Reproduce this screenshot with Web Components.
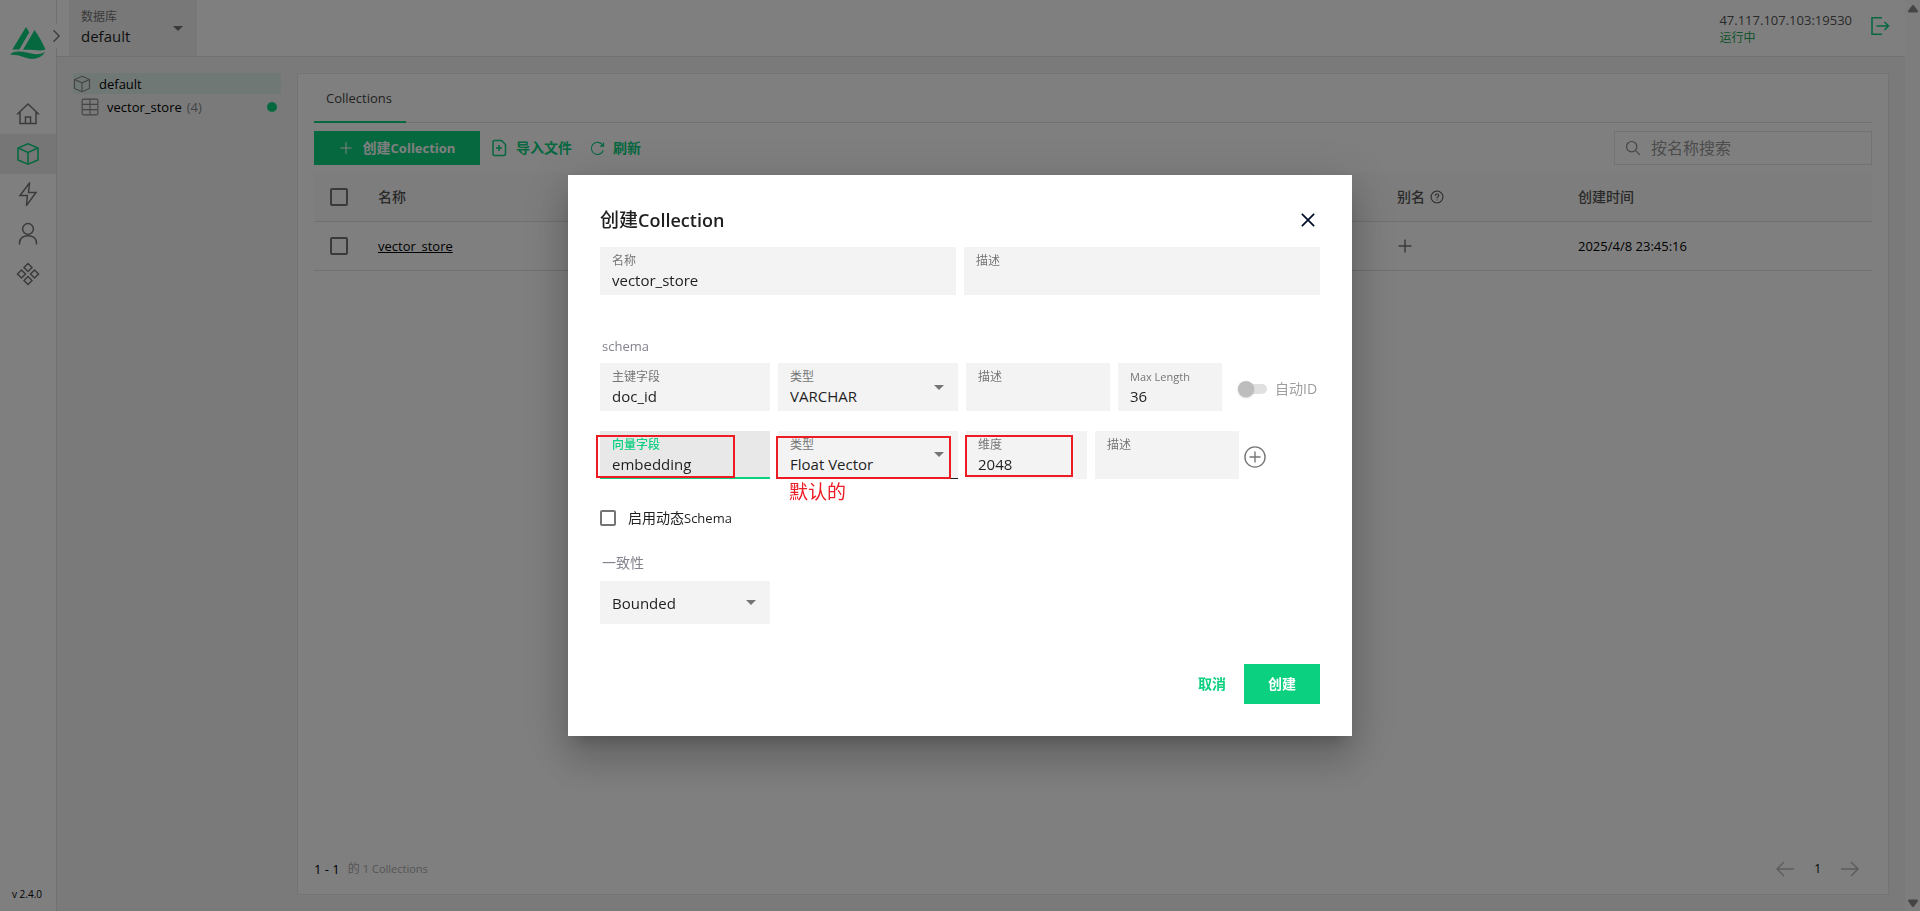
<!DOCTYPE html>
<html lang="zh-CN">
<head>
<meta charset="utf-8">
<title>Collections</title>
<style>
  html, body { height: 100%; margin: 0; }
  body {
    font-family: "Open Sans", "Noto Sans CJK SC", sans-serif;
    font-size: 14px; line-height: 20px; color: #010e29; background: #f5f5f5;
    overflow: hidden;
  }
</style>
</head>
<body>
<app-shell>
  <nav-rail slot="nav"></nav-rail>
  <top-bar slot="top"></top-bar>
  <database-tree slot="tree"></database-tree>
  <collections-panel></collections-panel>
  <scroll-track slot="scroll"></scroll-track>
</app-shell>
<create-dialog></create-dialog>

<script>
const ICONS = {
  logo: ['0 0 36 32', '<g fill="currentColor"><path d="M16 0 19.300 5.300 9.300 22.600H2.300Z"/><path d="M24.500 3C29 9 32.500 16 35.500 22.500 30 24.500 24 22.500 13 22.800Z"/><path d="M3 25.200C11 23.300 18 26 24 27 29 27.700 32.500 26.600 35.300 24.800 32.500 29.200 28 31.800 22.500 31.800 15 31.500 9.500 27 0 27.700Z"/></g>'],
  home: ['0 0 24 24', '<path d="M1 12.500 12 2l11 10.500M4 10v11.500h16V10M9.500 21.500V15h5v6.500"/>'],
  cube: ['0 0 24 24', '<path d="M12 1.700 22 6v12l-10 4.300L2 18V6ZM2 6l10 4.500L22 6M12 10.500v11.800"/>'],
  bolt: ['0 0 24 24', '<path d="M13.500 1 4 13.500h7.300L10.500 23.500 20 10.500h-7.500Z"/>'],
  user: ['0 0 24 24', '<circle cx="12" cy="7" r="5.400"/><path d="M3.500 22.500v-1.500c0-4.500 3.500-7.300 8.500-7.300s8.500 2.800 8.500 7.300v1.500"/>'],
  parts: ['0 0 24 24', '<path d="m12 1.500 4 4-4 4-4-4ZM12 14.500l4 4-4 4-4-4ZM5.500 8l4 4-4 4-4-4ZM18.500 8l4 4-4 4-4-4Z"/>'],
  grid: ['0 0 24 24', '<rect x="1.500" y="1.500" width="21" height="21" rx="2"/><path d="M2 8.500h20M2 15.500h20M12 2v20"/>'],
  chevron: ['0 0 10 16', '<path d="m1.500 1.500 6.500 6.500-6.500 6.500"/>'],
  logout: ['0 0 20 20', '<path d="M12 1.800H2v16.400h10M6.500 10h12M14.500 6l4 4-4 4"/>'],
  plus: ['0 0 16 16', '<path d="M8 1.500v13M1.500 8h13"/>'],
  file: ['0 0 16 18', '<path d="M3.500 1.500h7L14.500 5.500v9.500q0 1.500-1.500 1.500H3.500Q2 16.500 2 15V3q0-1.500 1.500-1.500ZM8 6v6M5 9h6"/>'],
  refresh: ['0 0 16 16', '<path d="M14.200 10A6.500 6.500 0 1 1 13.400 4.200L14.500 5.500M14.500 1.500v4h-4"/>'],
  search: ['0 0 18 18', '<circle cx="7.500" cy="7.500" r="5.800"/><path d="m11.700 11.700 5 5"/>'],
  help: ['0 0 16 16', '<circle cx="8" cy="8" r="6.800"/><path d="M6 6.500q0-2 2-2t2 1.800q0 1-1.200 1.600-.8.500-.8 1.500M8 10.800v1.200"/>'],
  prev: ['0 0 20 16', '<path d="M19 8H2M9 1 2 8l7 7"/>'],
  next: ['0 0 20 16', '<path d="M1 8h17M11 1l7 7-7 7"/>'],
  close: ['0 0 16 16', '<path d="m1 1 14 14M15 1 1 15"/>'],
  add: ['0 0 24 24', '<circle cx="12" cy="12" r="11"/><path d="M12 6v12M6 12h12"/>'],
  down: ['0 0 10 5', '<path fill="currentColor" stroke="none" d="M0 0h10L5 5Z"/>'],
  thumb: ['0 0 10 8', '<path fill="currentColor" stroke="none" d="M4 .5q1-1 2 0l4 5.500q0 1.500-1 1.500H1Q0 7.500 0 6Z"/>']
};

const BASE = `<style>
  :host, *, *::before, *::after { box-sizing: border-box; }
  button, input, select { font: inherit; color: inherit; border: 0; margin: 0; padding: 0; background: none; border-radius: 0; outline: 0; appearance: none; }
  a { color: inherit; }
  .en { font-size: 13px; }
</style>`;

class Base extends HTMLElement {
  constructor() {
    super();
    this.attachShadow({ mode: 'open' });
  }
  connectedCallback() { this.shadowRoot.innerHTML = BASE + this.view(); }
}

customElements.define('ui-icon', class extends Base {
  view() {
    const [box, body] = ICONS[this.getAttribute('name')];
    const [, , w, h] = box.split(' ').map(Number);
    const width = Number(this.getAttribute('size') || w);
    return `<style>:host { display: inline-flex; flex: none; } svg { display: block; }</style>
      <svg width="${width}" height="${Math.round(width * h / w)}" viewBox="${box}" fill="none"
        stroke="${this.getAttribute('name') === 'logo' ? 'none' : 'currentColor'}" stroke-width="${this.getAttribute('weight') || 1.5}" aria-hidden="true">${body}</svg>`;
  }
});

customElements.define('app-shell', class extends Base {
  view() {
    return `<style>
      :host { display: grid; grid-template-columns: auto 1fr auto; height: 100vh; }
      .main { display: grid; grid-template-rows: auto 1fr; min-width: 0; }
      .work { display: grid; grid-template-columns: 208px 1fr; gap: 16px; padding: 16px; min-height: 0; }
    </style>
    <slot name="nav"></slot>
    <div class="main">
      <slot name="top"></slot>
      <main class="work"><slot name="tree"></slot><slot></slot></main>
    </div>
    <slot name="scroll"></slot>`;
  }
});

customElements.define('nav-rail', class extends Base {
  view() {
    const items = ['home', 'cube', 'bolt', 'user', 'parts'];
    const names = ['主页', '数据库', '搜索', '用户', '系统'];
    return `<style>
      :host { position: relative; display: flex; flex-direction: column; width: 57px; background: #fff; border-right: 1px solid #e0e0e0; }
      .logo { display: flex; padding: 27px 0 35px 10px; color: #0ad07f; }
      .toggle { position: absolute; top: 24px; right: -7px; width: 13px; height: 24px; display: flex; align-items: center; justify-content: center; background: #fff; color: #777; }
      nav { display: flex; flex-direction: column; }
      a { display: flex; align-items: center; justify-content: center; height: 40px; color: #777; }
      a.on { background: #ededed; color: #0ad07f; }
      .ver { margin-top: auto; padding: 0 0 8px 12px; font-size: 10px; line-height: 18px; color: #000; }
    </style>
    <div class="logo"><ui-icon name="logo" size="36"></ui-icon></div>
    <button class="toggle" aria-label="展开"><ui-icon name="chevron" size="9" weight="1.600"></ui-icon></button>
    <nav>${items.map((n, i) => `<a href="#${n}" aria-label="${names[i]}" class="${i === 1 ? 'on' : ''}"><ui-icon name="${n}" size="24"></ui-icon></a>`).join('')}</nav>
    <div class="ver">v 2.4.0</div>`;
  }
});

customElements.define('top-bar', class extends Base {
  view() {
    return `<style>
      :host { display: flex; justify-content: space-between; height: 57px; padding: 0 15px 0 12px; background: #fff; border-bottom: 1px solid #e0e0e0; }
      .host { display: flex; gap: 18px; padding-top: 11px; color: #555; }
      .addr { font-size: 13px; line-height: 18px; }
      .run { font-size: 12px; line-height: 18px; color: #1ba954; }
      button { align-self: flex-start; margin-top: 5px; color: #0ad07f; }
      select-field { width: 128px; --box: 56px; --top: 9px; --fill: #f0f0f0; }
    </style>
    <select-field label="数据库" value="default"></select-field>
    <div class="host"><div><div class="addr">47.117.107.103:19530</div><div class="run">运行中</div></div>
    <button aria-label="断开连接"><ui-icon name="logout" size="20"></ui-icon></button></div>`;
  }
});

customElements.define('database-tree', class extends Base {
  view() {
    return `<style>
      :host { display: flex; flex-direction: column; gap: 2px; color: #000; font-size: 13px; }
      a { display: flex; align-items: center; gap: 8px; height: 21px; text-decoration: none; color: #000; }
      ui-icon { color: #888; }
      .db { background: #e0f0ea; }
      .col { padding: 0 4px 0 8px; }
      .count { margin-left: -3px; color: #888; }
      i { margin-left: auto; width: 10px; height: 10px; border-radius: 50%; background: #0ad07f; }
    </style>
    <a class="db" href="#default"><ui-icon name="cube" size="18"></ui-icon>default</a>
    <a class="col" href="#vector_store"><ui-icon name="grid" size="18"></ui-icon><span class="name">vector_store</span><span class="count">(4)</span><i></i></a>`;
  }
});

customElements.define('collections-panel', class extends Base {
  view() {
    return `<style>
      :host { display: flex; flex-direction: column; min-width: 0; padding: 0 16px; background: #fff; border: 1px solid #e9e9e9; }
      .tabs { display: flex; border-bottom: 1px solid #e0e0e0; }
      .tab { height: 49px; margin-bottom: -1px; padding: 0 12px; border-bottom: 2px solid #0ad07f; color: #444; min-width: 92px; text-align: left; font-size: 13px; }
      .bar { display: flex; align-items: center; height: 34px; margin: 8px 0; font-weight: 700; color: #0ad07f; }
      .bar button { display: flex; align-items: center; height: 34px; }
      .bar .new { width: 166px; justify-content: center; gap: 10px; background: #0ad07f; color: #fff; }
      .file { gap: 9px; margin-left: 11px; }
      .reload { gap: 8px; margin-left: 18px; }
      .find { margin-left: auto; width: 258px; height: 34px; display: flex; align-items: center; gap: 10px; padding: 0 10px; border: 1px solid #e6e6e6; font-weight: 400; font-size: 16px; color: #888; }
      .find input { flex: 1; min-width: 0; }
      .find input::placeholder { color: #999; opacity: 1; }
      table { width: 100%; border-collapse: separate; border-spacing: 0; table-layout: fixed; }
      th, td { padding: 0 16px; height: 49px; text-align: left; font-weight: 400; border-bottom: 1px solid #e0e0e0; }
      th { background: #fafafa; color: #555; font-weight: 500; }
      td { color: #000; font-size: 13px; }
      .check { width: 48px; } .alias { width: 181px; } .time { width: 310px; }
      input[type=checkbox] { display: block; width: 18px; height: 18px; border: 2px solid #757575; border-radius: 2px; }
      .head { display: inline-flex; align-items: center; gap: 5px; }
      td button { display: flex; color: #777; }
      .foot { display: flex; align-items: center; height: 20px; margin: auto 0 15px; font-size: 12px; color: #aaa; }
      .foot b { font-weight: 400; font-size: 13px; color: #000; margin-right: 8px; }
      .foot .en { font-size: 11px; margin-left: 3px; }
      .pages { display: flex; align-items: center; gap: 19px; margin-left: auto; padding-right: 12px; color: #000; }
      .pages button { display: flex; color: #bbb; }
    </style>
    <div class="tabs" role="tablist"><button class="tab" role="tab" aria-selected="true">Collections</button></div>
    <div class="bar">
      <button class="new"><ui-icon name="plus" size="14" weight="1.200"></ui-icon><span>创建<span class="en">Collection</span></span></button>
      <button class="file"><ui-icon name="file" size="16"></ui-icon>导入文件</button>
      <button class="reload"><ui-icon name="refresh" size="15" weight="1.200"></ui-icon>刷新</button>
      <label class="find"><ui-icon name="search" size="16" weight="1.300"></ui-icon><input type="search" aria-label="按名称搜索" placeholder="按名称搜索"></label>
    </div>
    <table>
      <thead><tr><th class="check"><input type="checkbox" aria-label="全选"></th><th>名称</th><th class="alias"><span class="head">别名<ui-icon name="help" size="14" weight="1.200"></ui-icon></span></th><th class="time">创建时间</th></tr></thead>
      <tbody><tr><td><input type="checkbox" aria-label="选择 vector_store"></td><td><a href="#vector_store">vector_store</a></td><td><button aria-label="添加别名"><ui-icon name="plus" size="16"></ui-icon></button></td><td>2025/4/8 23:45:16</td></tr></tbody>
    </table>
    <div class="foot"><b>1 - 1</b><span>的<span class="en">1 Collections</span></span>
      <div class="pages"><button aria-label="上一页"><ui-icon name="prev" size="20"></ui-icon></button><span>1</span><button aria-label="下一页"><ui-icon name="next" size="20"></ui-icon></button></div>
    </div>`;
  }
});

customElements.define('scroll-track', class extends Base {
  view() {
    return `<style>
      :host { display: flex; flex-direction: column; justify-content: space-between; align-items: center; width: 15px; padding: 5px 0 4px; background: #fafafa; color: #8b8b8b; }
      .end { display: flex; rotate: 180deg; }
    </style><ui-icon name="thumb"></ui-icon><div class="end"><ui-icon name="thumb"></ui-icon></div>`;
  }
});

const FIELD = `<style>
  :host { display: block; position: relative; flex: none; height: var(--box, 48px); padding: var(--top, 6px) 12px 0; background: var(--fill, #f3f3f3); }
  label { display: block; font-size: 12px; line-height: 16px; color: #757575; }
  input, select { display: block; width: 100%; height: 22px; font-size: 15px; line-height: 22px; color: #1f1f1f; }
  :host([active]) { --fill: #e8e8e8; border-bottom: 2px solid #0ad07f; }
  :host([active]) label { color: #0ad07f; font-weight: 500; }
  :host([hover]) { border-bottom: 1px solid #1f1f1f; }
  :host([latin]) label { font-size: 11px; }
</style>`;

customElements.define('text-field', class extends Base {
  view() {
    return `${FIELD}<label for="f">${this.getAttribute('label')}</label>
      <input id="f" type="text" value="${this.getAttribute('value') || ''}"><slot></slot>`;
  }
});

customElements.define('select-field', class extends Base {
  view() {
    const label = this.getAttribute('label');
    const v = this.getAttribute('value');
    return `${FIELD}<style>
      :host([plain]) { --box: 43px; --top: 11px; }
      .arrow { position: absolute; right: 14px; top: 0; bottom: 0; display: flex; align-items: center; color: #757575; pointer-events: none; }
    </style>
    ${this.hasAttribute('plain') ? '' : `<label for="f">${label}</label>`}
    <select id="f" ${this.hasAttribute('plain') ? `aria-label="${label}"` : ''}><option>${v}</option></select>
    <span class="arrow"><ui-icon name="down" size="10"></ui-icon></span><slot></slot>`;
  }
});

customElements.define('mark-box', class extends Base {
  view() {
    return `<style>
      :host { position: absolute; border: 2px solid #ed1c24; pointer-events: none; }
      ::slotted(span) { position: absolute; top: 100%; left: 11px; white-space: nowrap; font-size: 19px; line-height: 30px; color: #ed1c24; }
    </style><slot></slot>`;
  }
});

customElements.define('create-dialog', class extends Base {
  view() {
    return `<style>
      :host { position: fixed; inset: 0; display: flex; align-items: center; justify-content: center; background: rgba(0, 0, 0, .5); }
      form { width: 784px; padding: 32px; background: #fff; box-shadow: 0 11px 15px -7px rgba(0,0,0,.2), 0 24px 38px 3px rgba(0,0,0,.14), 0 9px 46px 8px rgba(0,0,0,.12); }
      header { display: flex; justify-content: space-between; align-items: center; height: 26px; margin-bottom: 14px; }
      h2 { margin: 0; font-size: 19px; line-height: 26px; font-weight: 500; color: #1f1f1f; }
      h2 .en { font-size: 18px; font-weight: 600; }
      header button { display: flex; padding: 5px; color: #010e29; }
      .row { display: flex; gap: 8px; align-items: center; }
      .row + .row { margin-top: 20px; }
      .even > * { flex: 1; }
      .cap { margin: 0 0 7px 2px; color: #82838e; }
      .schema { margin-top: 41px; font-size: 13px; }
      .w170 { width: 170px; } .w180 { width: 180px; } .w144 { width: 144px; } .w121 { width: 121px; } .w104 { width: 104px; }
      .auto { display: flex; align-items: center; gap: 8px; margin-left: 8px; padding-top: 4px; color: #9e9e9e; }
      .switch { width: 29px; height: 10px; border-radius: 5px; background: #e0e0e0; display: flex; align-items: center; }
      .switch::before { content: ""; width: 16px; height: 16px; border-radius: 50%; background: #bdbdbd; box-shadow: 0 1px 2px rgba(0,0,0,.2); }
      .plus { display: flex; margin-left: -3px; padding: 4px 0 0; color: #757575; }
      .dyn { display: flex; align-items: center; gap: 12px; margin: 29px 0 25px; color: #1f1f1f; }
      .dyn input { width: 16px; height: 16px; border: 2px solid #757575; border-radius: 2px; }
      .level { margin-bottom: 8px; }
      footer { display: flex; justify-content: flex-end; gap: 18px; margin-top: 40px; font-weight: 700; color: #0ad07f; }
      footer .ok { width: 76px; height: 40px; background: #0ad07f; color: #fff; }
      .m1 { left: -4px; top: 4px; width: 139px; height: 43px; }
      .m2 { left: -2px; top: 5px; width: 175px; height: 43px; }
      .m3 { left: -1px; top: 4px; width: 108px; height: 42px; }
    </style>
    <form role="dialog" aria-labelledby="t">
      <header><h2 id="t">创建<span class="en">Collection</span></h2><button type="button" aria-label="关闭"><ui-icon name="close" size="14" weight="2"></ui-icon></button></header>
      <div class="row even"><text-field label="名称" value="vector_store"></text-field><text-field label="描述"></text-field></div>
      <div class="cap schema">schema</div>
      <div class="row">
        <text-field class="w170" label="主键字段" value="doc_id"></text-field>
        <select-field class="w180" label="类型" value="VARCHAR"></select-field>
        <text-field class="w144" label="描述"></text-field>
        <text-field class="w104" label="Max Length" value="36" latin></text-field>
        <label class="auto"><input class="switch" type="checkbox" role="switch" disabled>自动ID</label>
      </div>
      <div class="row">
        <text-field class="w170" label="向量字段" value="embedding" active><mark-box class="m1"></mark-box></text-field>
        <select-field class="w180" label="类型" value="Float Vector" hover><mark-box class="m2"><span>默认的</span></mark-box></select-field>
        <text-field class="w121" label="维度" value="2048"><mark-box class="m3"></mark-box></text-field>
        <text-field class="w144" label="描述"></text-field>
        <button class="plus" type="button" aria-label="添加字段"><ui-icon name="add" size="22" weight="1.500"></ui-icon></button>
      </div>
      <label class="dyn"><input type="checkbox"><span>启用动态<span class="en">Schema</span></span></label>
      <div class="cap level">一致性</div>
      <select-field class="w170" label="一致性" value="Bounded" plain></select-field>
      <footer><button type="button">取消</button><button class="ok" type="button">创建</button></footer>
    </form>`;
  }
});
</script>
</body>
</html>
